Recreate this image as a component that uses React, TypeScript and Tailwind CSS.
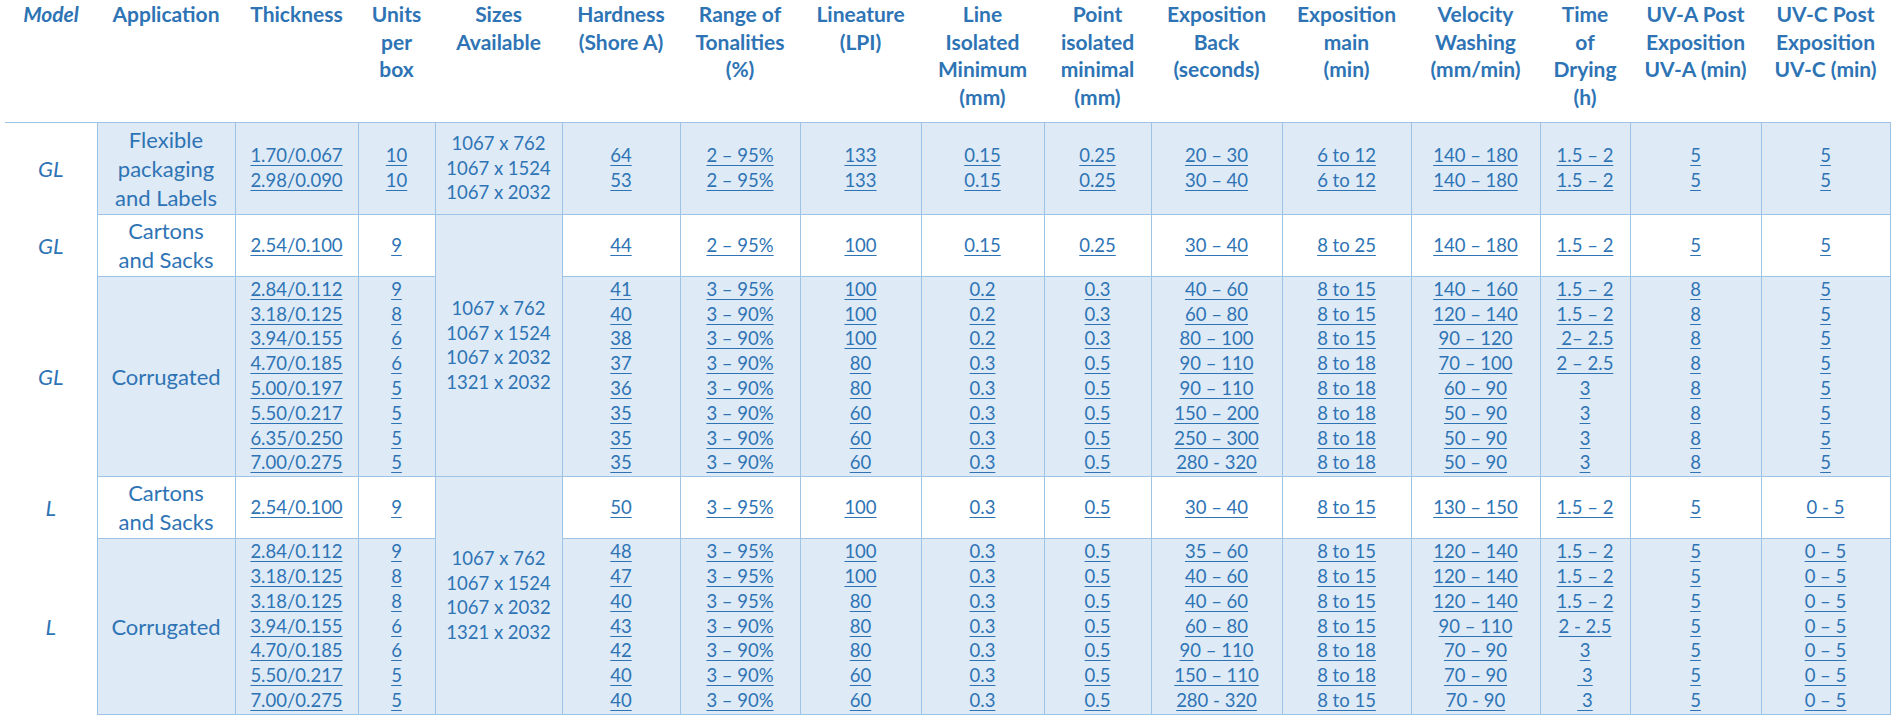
import React from 'react';

const BLUE_TEXT = 'text-[#2e74b5]';

const HEAD: { lines: string[]; italic?: boolean }[] = [
  { lines: ['Model'], italic: true },
  { lines: ['Application'] },
  { lines: ['Thickness'] },
  { lines: ['Units', 'per', 'box'] },
  { lines: ['Sizes', 'Available'] },
  { lines: ['Hardness', '(Shore A)'] },
  { lines: ['Range of', 'Tonalities', '(%)'] },
  { lines: ['Lineature', '(LPI)'] },
  { lines: ['Line', 'Isolated', 'Minimum', '(mm)'] },
  { lines: ['Point', 'isolated', 'minimal', '(mm)'] },
  { lines: ['Exposition', 'Back', '(seconds)'] },
  { lines: ['Exposition', 'main', '(min)'] },
  { lines: ['Velocity', 'Washing', '(mm/min)'] },
  { lines: ['Time', 'of', 'Drying', '(h)'] },
  { lines: ['UV-A Post', 'Exposition', 'UV-A (min)'] },
  { lines: ['UV-C Post', 'Exposition', 'UV-C (min)'] },
];

const WIDTHS = [92, 138, 123, 77, 127, 118, 120, 121, 123, 107, 131, 129, 129, 90, 131, 129];

const SIZES3 = ['1067 x 762', '1067 x 1524', '1067 x 2032'];
const SIZES4 = ['1067 x 762', '1067 x 1524', '1067 x 2032', '1321 x 2032'];

type Row = {
  model: string;
  app: string[];
  height: string;
  shaded: boolean;
  sizes?: { lines: string[]; rowSpan: number };
  // thickness, units, then hardness .. uv-c
  cols: string[][];
};

const ROWS: Row[] = [
  {
    model: 'GL',
    app: ['Flexible', 'packaging', 'and Labels'],
    height: 'h-[92px]',
    shaded: true,
    sizes: { lines: SIZES3, rowSpan: 1 },
    cols: [
      ['1.70/0.067', '2.98/0.090'],
      ['10', '10'],
      ['64', '53'],
      ['2 – 95%', '2 – 95%'],
      ['133', '133'],
      ['0.15', '0.15'],
      ['0.25', '0.25'],
      ['20 – 30', '30 – 40'],
      ['6 to 12', '6 to 12'],
      ['140 – 180', '140 – 180'],
      ['1.5 – 2', '1.5 – 2'],
      ['5', '5'],
      ['5', '5'],
    ],
  },
  {
    model: 'GL',
    app: ['Cartons', 'and Sacks'],
    height: 'h-[62px]',
    shaded: false,
    sizes: { lines: SIZES4, rowSpan: 2 },
    cols: [
      ['2.54/0.100'],
      ['9'],
      ['44'],
      ['2 – 95%'],
      ['100'],
      ['0.15'],
      ['0.25'],
      ['30 – 40'],
      ['8 to 25'],
      ['140 – 180'],
      ['1.5 – 2'],
      ['5'],
      ['5'],
    ],
  },
  {
    model: 'GL',
    app: ['Corrugated'],
    height: 'h-[200px]',
    shaded: true,
    cols: [
      ['2.84/0.112', '3.18/0.125', '3.94/0.155', '4.70/0.185', '5.00/0.197', '5.50/0.217', '6.35/0.250', '7.00/0.275'],
      ['9', '8', '6', '6', '5', '5', '5', '5'],
      ['41', '40', '38', '37', '36', '35', '35', '35'],
      ['3 – 95%', '3 – 90%', '3 – 90%', '3 – 90%', '3 – 90%', '3 – 90%', '3 – 90%', '3 – 90%'],
      ['100', '100', '100', '80', '80', '60', '60', '60'],
      ['0.2', '0.2', '0.2', '0.3', '0.3', '0.3', '0.3', '0.3'],
      ['0.3', '0.3', '0.3', '0.5', '0.5', '0.5', '0.5', '0.5'],
      ['40 – 60', '60 – 80', '80 – 100', '90 – 110', '90 – 110', '150 – 200', '250 – 300', '280 - 320'],
      ['8 to 15', '8 to 15', '8 to 15', '8 to 18', '8 to 18', '8 to 18', '8 to 18', '8 to 18'],
      ['140 – 160', '120 – 140', '90 – 120', '70 – 100', '60 – 90', '50 – 90', '50 – 90', '50 – 90'],
      ['1.5 – 2', '1.5 – 2', ' 2– 2.5', '2 – 2.5', '3', '3', '3', '3'],
      ['8', '8', '8', '8', '8', '8', '8', '8'],
      ['5', '5', '5', '5', '5', '5', '5', '5'],
    ],
  },
  {
    model: 'L',
    app: ['Cartons', 'and Sacks'],
    height: 'h-[62px]',
    shaded: false,
    sizes: { lines: SIZES4, rowSpan: 2 },
    cols: [
      ['2.54/0.100'],
      ['9'],
      ['50'],
      ['3 – 95%'],
      ['100'],
      ['0.3'],
      ['0.5'],
      ['30 – 40'],
      ['8 to 15'],
      ['130 – 150'],
      ['1.5 – 2'],
      ['5'],
      ['0 - 5'],
    ],
  },
  {
    model: 'L',
    app: ['Corrugated'],
    height: 'h-[176px]',
    shaded: true,
    cols: [
      ['2.84/0.112', '3.18/0.125', '3.18/0.125', '3.94/0.155', '4.70/0.185', '5.50/0.217', '7.00/0.275'],
      ['9', '8', '8', '6', '6', '5', '5'],
      ['48', '47', '40', '43', '42', '40', '40'],
      ['3 – 95%', '3 – 95%', '3 – 95%', '3 – 90%', '3 – 90%', '3 – 90%', '3 – 90%'],
      ['100', '100', '80', '80', '80', '60', '60'],
      ['0.3', '0.3', '0.3', '0.3', '0.3', '0.3', '0.3'],
      ['0.5', '0.5', '0.5', '0.5', '0.5', '0.5', '0.5'],
      ['35 – 60', '40 – 60', '40 – 60', '60 – 80', '90 – 110', '150 – 110', '280 - 320'],
      ['8 to 15', '8 to 15', '8 to 15', '8 to 15', '8 to 18', '8 to 18', '8 to 15'],
      ['120 – 140', '120 – 140', '120 – 140', '90 – 110', '70 – 90', '70 – 90', '70 - 90'],
      ['1.5 – 2', '1.5 – 2', '1.5 – 2', '2 - 2.5', '3', ' 3', ' 3'],
      ['5', '5', '5', '5', '5', '5', '5'],
      ['0 – 5', '0 – 5', '0 – 5', '0 – 5', '0 – 5', '0 – 5', '0 – 5'],
    ],
  },
];

function Values({ values }: { values: string[] }) {
  return (
    <>
      {values.map((v, i) => (
        <div key={i} className="leading-[24.8px]">
          <span className="whitespace-pre underline decoration-1 underline-offset-[3px]">{v}</span>
        </div>
      ))}
    </>
  );
}

function DataCell({ values, shaded }: { values: string[]; shaded: boolean }) {
  return (
    <td
      className={`border border-[#9dc3e6] p-0 text-center align-middle text-[18.5px] ${shaded ? 'bg-[#deeaf6]' : 'bg-white'}`}
    >
      <Values values={values} />
    </td>
  );
}

export default function App() {
  return (
    <div className={`h-[719px] w-[1897px] overflow-hidden bg-white ${BLUE_TEXT}`} style={{ fontFamily: 'Lato, "Open Sans", sans-serif' }}>
      <table className="ml-[5px] w-[1885px] table-fixed border-collapse">
        <colgroup>
          {WIDTHS.map((w, i) => (
            <col key={i} style={{ width: w }} />
          ))}
        </colgroup>
        <thead>
          <tr className="h-[122px]">
            {HEAD.map((h, i) => (
              <th
                key={i}
                className={`border-b border-[#9dc3e6] p-0 text-center align-top text-[21px] font-bold leading-[27.5px] ${h.italic ? 'italic' : ''}`}
              >
                {h.lines.map((l, j) => (
                  <div key={j} className="whitespace-nowrap">
                    {l}
                  </div>
                ))}
              </th>
            ))}
          </tr>
        </thead>
        <tbody>
          {ROWS.map((r, ri) => (
            <tr key={ri} className={r.height}>
              <td className="border-0 p-0 text-center align-middle text-[22px] italic">{r.model}</td>
              <td
                className={`border border-[#9dc3e6] p-0 text-center align-middle text-[22px] leading-[29px] ${r.shaded ? 'bg-[#deeaf6]' : 'bg-white'}`}
              >
                {r.app.map((a, i) => (
                  <div key={i}>{a}</div>
                ))}
              </td>
              <DataCell values={r.cols[0]} shaded={r.shaded} />
              <DataCell values={r.cols[1]} shaded={r.shaded} />
              {r.sizes && (
                <td
                  rowSpan={r.sizes.rowSpan}
                  className="border border-[#9dc3e6] bg-[#deeaf6] p-0 text-center align-middle text-[18.5px] leading-[24.5px]"
                >
                  {r.sizes.lines.map((s, i) => (
                    <div key={i}>{s}</div>
                  ))}
                </td>
              )}
              {r.cols.slice(2).map((c, ci) => (
                <DataCell key={ci} values={c} shaded={r.shaded} />
              ))}
            </tr>
          ))}
        </tbody>
      </table>
    </div>
  );
}
